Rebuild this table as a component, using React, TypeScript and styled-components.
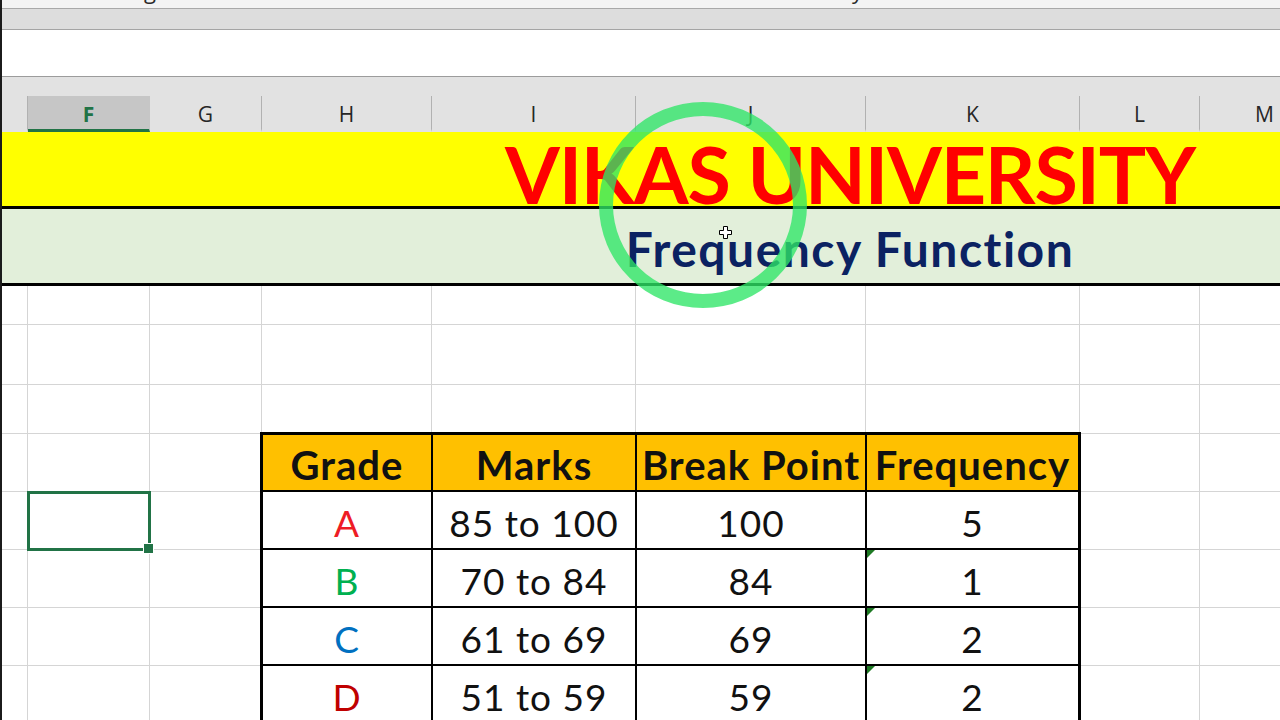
import React from "react";
import styled, { createGlobalStyle } from "styled-components";

const GlobalStyle = createGlobalStyle`
  html, body {
    margin: 0;
    padding: 0;
    background: #ffffff;
    overflow: hidden;
  }
  * { box-sizing: border-box; }
`;

const COLS = "26px 122px 112px 170px 204px 230px 214px 120px 130px";

const Window = styled.div`
  position: relative;
  width: 1280px;
  height: 720px;
  overflow: hidden;
  border-left: 2px solid #1b1b1b;
  background: #ffffff;
  font-family: Lato, "Open Sans", sans-serif;
`;

const FormulaTail = styled.div`
  height: 9px;
  background: #f3f3f3;
  border-bottom: 1px solid #a8a8a8;
  overflow: hidden;
  display: flex;
  padding-left: 142px;
  gap: 696px;
  font: 22px/22px "Open Sans", sans-serif;
  color: #2a2a2a;
`;

const TailGlyph = styled.span`
  margin-top: -21px;
`;

const RibbonBand = styled.div`
  height: 21px;
  background: #dddddd;
  border-bottom: 1px solid #a4a4a4;
`;

const NameBand = styled.div`
  height: 47px;
  background: #ffffff;
  border-bottom: 1px solid #9c9c9c;
`;

const HeaderRow = styled.div`
  display: grid;
  grid-template-columns: ${COLS};
  height: 55px;
  background: #e2e2e2;
  align-items: end;
`;

const HeaderCell = styled.div<{ $active?: boolean }>`
  height: 36px;
  display: flex;
  align-items: center;
  justify-content: center;
  font-family: "Open Sans", sans-serif;
  font-size: 21px;
  color: ${(p) => (p.$active ? "#217346" : "#262626")};
  font-weight: ${(p) => (p.$active ? 700 : 400)};
  background: ${(p) => (p.$active ? "#c6c6c6" : "transparent")};
  border-right: 1px solid ${(p) => (p.$active ? "#c6c6c6" : "#b1b1b1")};
  border-bottom: 3px solid ${(p) => (p.$active ? "#217346" : "#e2e2e2")};
  padding-top: 2px;
`;

const Banner = styled.div<{ $bg: string }>`
  height: 77px;
  background: ${(p) => p.$bg};
  border-bottom: 3px solid #000000;
  display: flex;
  align-items: center;
  justify-content: center;
  padding-left: 418px;
`;

const Title = styled.div`
  font-family: Lato, sans-serif;
  font-weight: 700;
  font-size: 79px;
  letter-spacing: -1.2px;
  line-height: 1;
  color: #ff0000;
  padding-top: 8px;
  white-space: nowrap;
`;

const Subtitle = styled.div`
  font-family: Lato, sans-serif;
  font-weight: 700;
  font-size: 48px;
  letter-spacing: 1.5px;
  line-height: 1;
  color: #0b2262;
  padding-top: 5px;
  white-space: nowrap;
`;

const Sheet = styled.div`
  display: grid;
  grid-template-columns: ${COLS};
  grid-template-rows: 39px 60px 49px repeat(5, 58px);
`;

const GridCell = styled.div<{ $selected?: boolean }>`
  border-right: 1px solid #d5d5d5;
  border-bottom: 1px solid #d5d5d5;
  position: relative;
  ${(p) =>
    p.$selected &&
    `
    z-index: 3;
    outline: 3px solid #217346;
    outline-offset: -2px;
    &::after {
      content: "";
      position: absolute;
      right: -5px;
      bottom: -5px;
      width: 9px;
      height: 9px;
      background: #217346;
      border: 1px solid #ffffff;
    }
  `}
`;

const Table = styled.div`
  grid-column: 4 / span 4;
  grid-row: 4 / span 5;
  margin: -2px -1px 0 -2px;
  display: grid;
  grid-template-columns: 170px 204px 230px 1fr;
  grid-template-rows: 57px repeat(4, 58px);
  border-top: 3px solid #000000;
  border-left: 3px solid #000000;
  background: #ffffff;
  position: relative;
  z-index: 2;
`;

const TableCell = styled.div<{ $head?: boolean; $color?: string; $last?: boolean; $flag?: boolean }>`
  position: relative;
  display: flex;
  align-items: center;
  justify-content: center;
  padding-top: 4px;
  border-right: ${(p) => (p.$last ? 3 : 2)}px solid #000000;
  border-bottom: 2px solid #000000;
  background: ${(p) => (p.$head ? "#ffc000" : "#ffffff")};
  font-family: Lato, sans-serif;
  font-weight: ${(p) => (p.$head ? 700 : 400)};
  font-size: ${(p) => (p.$head ? 40 : 37)}px;
  letter-spacing: 1px;
  line-height: 1;
  color: ${(p) => p.$color || "#111111"};
  white-space: nowrap;
  ${(p) =>
    p.$flag &&
    `
    &::before {
      content: "";
      position: absolute;
      left: 0;
      top: 0;
      border-top: 8px solid #1e7a24;
      border-right: 8px solid transparent;
    }
  `}
`;

const Highlight = styled.div`
  position: absolute;
  left: 597px;
  top: 102px;
  width: 208px;
  height: 206px;
  border-radius: 50%;
  border: 14px solid rgba(46, 230, 102, 0.78);
  pointer-events: none;
  z-index: 10;
`;

const Cursor = styled.svg`
  position: absolute;
  left: 716px;
  top: 225px;
  z-index: 11;
`;

const headers = ["", "F", "G", "H", "I", "J", "K", "L", "M"];

const rows = [
  { grade: "A", color: "#ee1c25", marks: "85 to 100", bp: "100", freq: "5" },
  { grade: "B", color: "#00b050", marks: "70 to 84", bp: "84", freq: "1" },
  { grade: "C", color: "#0070c0", marks: "61 to 69", bp: "69", freq: "2" },
  { grade: "D", color: "#c00000", marks: "51 to 59", bp: "59", freq: "2" },
];

export default function App() {
  const totalCells = 9 * 8 - 4 * 5;
  const cells = Array.from({ length: totalCells }, (_, i) => i);
  // auto placement: rows 0..2 hold 9 cells each (27), row 3 holds 5 (cols E,F,G,L,M);
  // row 4 starts at index 32: column E -> 32, column F -> 33
  const selectedIndex = 33;

  return (
    <Window>
      <GlobalStyle />
      <FormulaTail>
        <TailGlyph>g</TailGlyph>
        <TailGlyph>y</TailGlyph>
      </FormulaTail>
      <RibbonBand />
      <NameBand />
      <HeaderRow>
        {headers.map((h, i) => (
          <HeaderCell key={i} $active={h === "F"}>
            {h}
          </HeaderCell>
        ))}
      </HeaderRow>
      <Banner $bg="#ffff00">
        <Title>VIKAS UNIVERSITY</Title>
      </Banner>
      <Banner $bg="#e2efda">
        <Subtitle>Frequency Function</Subtitle>
      </Banner>
      <Sheet>
        <Table>
          <TableCell $head>Grade</TableCell>
          <TableCell $head>Marks</TableCell>
          <TableCell $head>Break Point</TableCell>
          <TableCell $head $last>
            Frequency
          </TableCell>
          {rows.map((r, i) => (
            <React.Fragment key={r.grade}>
              <TableCell $color={r.color}>{r.grade}</TableCell>
              <TableCell>{r.marks}</TableCell>
              <TableCell>{r.bp}</TableCell>
              <TableCell $last $flag={i > 0}>
                {r.freq}
              </TableCell>
            </React.Fragment>
          ))}
        </Table>
        {cells.map((i) => (
          <GridCell key={i} $selected={i === selectedIndex} />
        ))}
      </Sheet>
      <Highlight />
      <Cursor width="15" height="15" viewBox="0 0 15 15">
        <path
          d="M5.5 1.5h4v4h4v4h-4v4h-4v-4h-4v-4h4z"
          fill="#ffffff"
          stroke="#000000"
          strokeWidth="1"
        />
      </Cursor>
    </Window>
  );
}
